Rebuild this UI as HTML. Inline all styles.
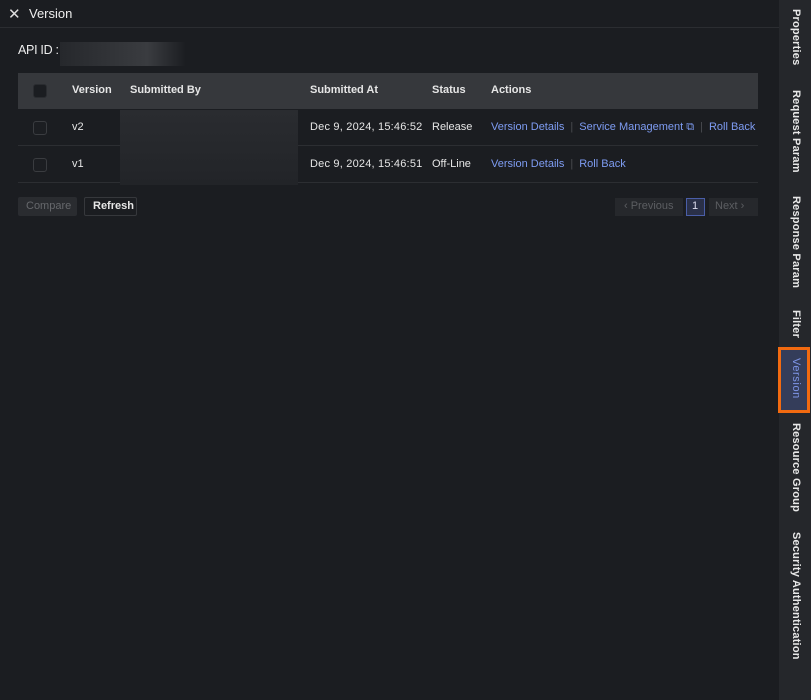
<!DOCTYPE html>
<html><head><style>
*{margin:0;padding:0;box-sizing:border-box}
body{width:811px;height:700px;background:#1b1d21;font-family:"Liberation Sans",sans-serif;color:#e6e6e6;position:relative;overflow:hidden;font-size:11px}
.a{position:absolute}
.hdr{left:0;top:0;width:779px;height:28px;border-bottom:1px solid #2b2d31}
.side{left:779px;top:0;width:32px;height:700px;background:#25272b}
.v{position:absolute;writing-mode:vertical-rl;font-size:11px;font-weight:bold;color:#e8e8e8;left:790px;white-space:nowrap;letter-spacing:.2px}
.th{left:18px;top:73px;width:740px;height:36px;background:#36383c}
.row{left:18px;width:740px;height:37px;border-bottom:1px solid #2c2e32}
.cb{position:absolute;width:14px;height:14px;border:1px solid #3a3c40;border-radius:3px;background:#1c1e22}
.t{position:absolute;white-space:nowrap}
.b{font-weight:bold}
.lk{color:#7e9cf2}
.sep{color:#4a4c50;margin:0 6px}
</style></head><body>
<div class="a hdr"></div>
<div class="t" style="left:8px;top:5px;font-size:15px;color:#ddd">✕</div>
<div class="t" style="left:29px;top:6px;font-size:13px;color:#eee">Version</div>
<div class="t" style="left:18px;top:43px;font-size:12.5px;color:#eee;letter-spacing:-.3px">API ID :</div>
<div class="a" style="left:60px;top:42px;width:125px;height:24px;background:linear-gradient(90deg,#26282c,#3a3c40 70%,#1c1e22)"></div>
<div class="a th"></div>
<div class="cb" style="left:33px;top:84px;background:#1b1d21;border-color:#2a2c30"></div>
<div class="t b" style="left:72px;top:84px">Version</div>
<div class="t b" style="left:130px;top:84px">Submitted By</div>
<div class="t b" style="left:310px;top:84px">Submitted At</div>
<div class="t b" style="left:432px;top:84px">Status</div>
<div class="t b" style="left:491px;top:84px">Actions</div>
<div class="a row" style="top:109px"></div>
<div class="a row" style="top:146px"></div>
<div class="a" style="left:120px;top:110px;width:178px;height:75px;background:linear-gradient(180deg,#2a2c30,#222428)"></div>
<div class="cb" style="left:33px;top:121px"></div>
<div class="cb" style="left:33px;top:158px"></div>
<div class="t" style="left:72px;top:121px">v2</div>
<div class="t" style="left:72px;top:158px">v1</div>
<div class="t" style="left:310px;top:121px;letter-spacing:.2px">Dec 9, 2024, 15:46:52</div>
<div class="t" style="left:310px;top:158px;letter-spacing:.2px">Dec 9, 2024, 15:46:51</div>
<div class="t" style="left:432px;top:121px">Release</div>
<div class="t" style="left:432px;top:158px">Off-Line</div>
<div class="t" style="left:491px;top:121px"><span class="lk">Version Details</span><span class="sep">|</span><span class="lk">Service Management ⧉</span><span class="sep">|</span><span class="lk">Roll Back</span></div>
<div class="t" style="left:491px;top:158px"><span class="lk">Version Details</span><span class="sep">|</span><span class="lk">Roll Back</span></div>
<div class="a" style="left:18px;top:197px;width:59px;height:19px;background:#2a2c30;border-radius:2px"></div>
<div class="t" style="left:26px;top:200px;color:#66686c">Compare</div>
<div class="a" style="left:84px;top:197px;width:53px;height:19px;border:1px solid #36383c;border-radius:2px"></div>
<div class="t b" style="left:93px;top:200px">Refresh</div>
<div class="a" style="left:615px;top:198px;width:68px;height:18px;background:#26282c"></div>
<div class="t" style="left:624px;top:200px;color:#5c5e62">‹ Previous</div>
<div class="a" style="left:686px;top:198px;width:19px;height:18px;border:1px solid #4a5ea8;background:#2a3048"></div>
<div class="t" style="left:692px;top:200px;color:#dde">1</div>
<div class="a" style="left:709px;top:198px;width:49px;height:18px;background:#26282c"></div>
<div class="t" style="left:715px;top:200px;color:#5c5e62">Next ›</div>
<div class="a side"></div>
<div class="v" style="top:9px">Properties</div>
<div class="v" style="top:90px">Request Param</div>
<div class="v" style="top:196px">Response Param</div>
<div class="v" style="top:310px">Filter</div>
<div class="a" style="left:778px;top:347px;width:32px;height:66px;border:3px solid #f26a10;background:#343d5a"></div>
<div class="v" style="top:358px;color:#7e95e6;font-weight:normal;letter-spacing:.6px">Version</div>
<div class="v" style="top:423px">Resource Group</div>
<div class="v" style="top:532px">Security Authentication</div>
</body></html>
